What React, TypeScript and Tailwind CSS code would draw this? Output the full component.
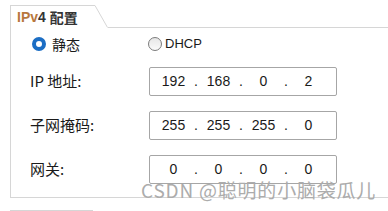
import React from 'react';

const rows = [
  { label: 'IP 地址:', parts: ['192', '168', '0', '2'] },
  { label: '子网掩码:', parts: ['255', '255', '255', '0'] },
  { label: '网关:', parts: ['0', '0', '0', '0'] },
];

const cjk = { fontFamily: '"Noto Sans CJK SC", "Liberation Sans", sans-serif' };
const latin = { fontFamily: '"Liberation Sans", "Noto Sans CJK SC", sans-serif' };

const IpField = ({ parts }: { parts: string[] }) => (
  <div
    className="flex h-[29px] w-[188px] items-center rounded-[2px] border border-[#a6a6a6] bg-white pl-[6px] text-[14px] text-[#1a1a1a]"
    style={latin}
  >
    {parts.map((p, i) => (
      <React.Fragment key={i}>
        {i > 0 && <span className="w-[10px] text-center">.</span>}
        <span className="w-[35px] text-center">{p}</span>
      </React.Fragment>
    ))}
  </div>
);

export default function App() {
  return (
    <div className="relative h-[211px] w-[388px] overflow-hidden bg-white" style={cjk}>
      <div className="pl-[10px] pt-[5px]">
        {/* tab header */}
        <div className="flex h-[23px]">
          <div className="flex w-[85px] items-center border-l border-t border-[#d6d6d6] pl-[6px] text-[14px] font-bold leading-none">
            <span className="text-[#b8773d]" style={latin}>IPv</span>
            <span className="text-[#333]" style={latin}>4</span>
            <span className="ml-[4px] text-[#333]">配置</span>
          </div>
          <svg width="13" height="23" className="shrink-0">
            <line x1="0" y1="0.5" x2="12.5" y2="22.5" stroke="#d6d6d6" strokeWidth="1" />
          </svg>
          <div className="flex-1 border-b border-[#d6d6d6]" />
        </div>

        {/* panel */}
        <div className="flex h-[170px] flex-col border-b border-l border-[#d6d6d6] pt-[8px]">
          <div className="flex h-[16px] items-center pl-[21px]">
            <div className="flex w-[116px] items-center">
              <span className="h-[14px] w-[14px] rounded-full border-[4px] border-[#1c6ec4] bg-white" />
              <span className="ml-[6px] text-[14px] text-[#1a1a1a]">静态</span>
            </div>
            <span className="h-[14px] w-[14px] rounded-full border border-[#7c7c7c] bg-gradient-to-b from-[#e6e6e6] to-[#fafafa]" />
            <span className="ml-[3px] text-[13px] text-[#1a1a1a]" style={latin}>DHCP</span>
          </div>

          <div className="mt-[15px] flex flex-col gap-[15px] pl-[19px]">
            {rows.map((r) => (
              <div key={r.label} className="flex items-center">
                <span className="w-[119px] text-[15px] text-[#1a1a1a]">{r.label}</span>
                <IpField parts={r.parts} />
              </div>
            ))}
          </div>
        </div>

        {/* next tab start */}
        <div className="mt-[12px] w-[83px] border-t border-[#d6d6d6]" />
      </div>

      <div className="absolute left-[141px] top-[180px] whitespace-nowrap text-[19px] leading-none tracking-[0.8px] text-[#acacac]">
        CSDN @聪明的小脑袋瓜儿
      </div>
    </div>
  );
}
